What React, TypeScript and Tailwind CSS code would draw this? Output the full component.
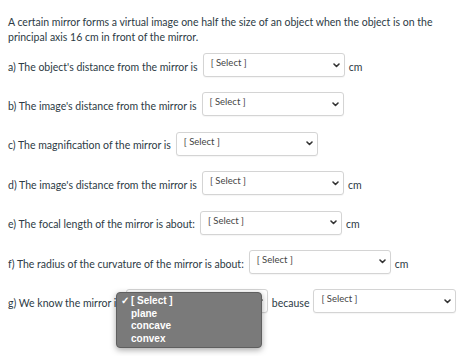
import React from "react";

function Chevron() {
  return (
    <svg width="7" height="5" viewBox="0 0 7 5" aria-hidden="true" className="shrink-0">
      <path d="M1 1l2.5 2.5L6 1" fill="none" stroke="#333" strokeWidth="1.6" strokeLinecap="round" strokeLinejoin="round" />
    </svg>
  );
}

function FakeSelect({ width = "w-[142px]" }: { width?: string }) {
  return (
    <div
      className={`${width} flex h-[24px] shrink-0 items-start justify-between rounded-[3px] border border-[#d4d4d4] bg-white pl-[7px] pr-[4px] shadow-[0_1px_1px_rgba(0,0,0,0.04)]`}
    >
      <span className="pt-[3px] text-[9.5px] leading-[12px] text-[#444]">[ Select ]</span>
      <span className="self-center">
        <Chevron />
      </span>
    </div>
  );
}

function Row({ label, unit }: { label: string; unit?: boolean }) {
  return (
    <div className="flex h-[24px] items-center">
      <span className="mt-[5px] mr-[5px] whitespace-nowrap">{label}</span>
      <FakeSelect />
      {unit && <span className="mt-[5px] ml-[4px]">cm</span>}
    </div>
  );
}

export default function App() {
  return (
    <div
      className="relative h-[356px] w-[474px] overflow-hidden bg-white px-[8px] pt-[15px] text-[10.5px] text-[#2d3b45]"
      style={{ fontFamily: "Lato, 'Open Sans', sans-serif" }}
    >
      <p className="leading-[15px]">
        A certain mirror forms a virtual image one half the size of an object when the object is on the
        <br />
        principal axis 16 cm in front of the mirror.
      </p>

      <div className="mt-[8px] flex flex-col gap-[15.4px]">
        <Row label="a) The object's distance from the mirror is" unit />
        <Row label="b) The image's distance from the mirror is" />
        <Row label="c) The magnification of the mirror is" />
        <Row label="d) The image's distance from the mirror is" unit />
        <Row label="e) The focal length of the mirror is about:" unit />
        <Row label="f) The radius of the curvature of the mirror is about:" unit />
        <div className="flex h-[24px] items-center">
          <span className="mt-[5px] mr-[5px] whitespace-nowrap">g) We know the mirror is</span>
          <FakeSelect />
          <span className="mt-[5px] mx-[4px]">because</span>
          <FakeSelect width="w-[143px]" />
        </div>
      </div>

      <div
        className="absolute left-[116px] top-[292px] h-[56px] w-[146px] rounded-[4px] border border-[#5f5f5f] bg-[#7a7a7a] px-[4px] pt-[2px] text-[10px] font-bold leading-[12.5px] text-white shadow-[0_2px_6px_rgba(0,0,0,0.35)]"
        style={{ fontFamily: "'Liberation Sans', Arial, sans-serif" }}
      >
        <div className="flex">
          <span className="w-[10px]">✓</span>
          <span>[ Select ]</span>
        </div>
        <div className="pl-[10px]">plane</div>
        <div className="pl-[10px]">concave</div>
        <div className="pl-[10px]">convex</div>
      </div>
    </div>
  );
}
